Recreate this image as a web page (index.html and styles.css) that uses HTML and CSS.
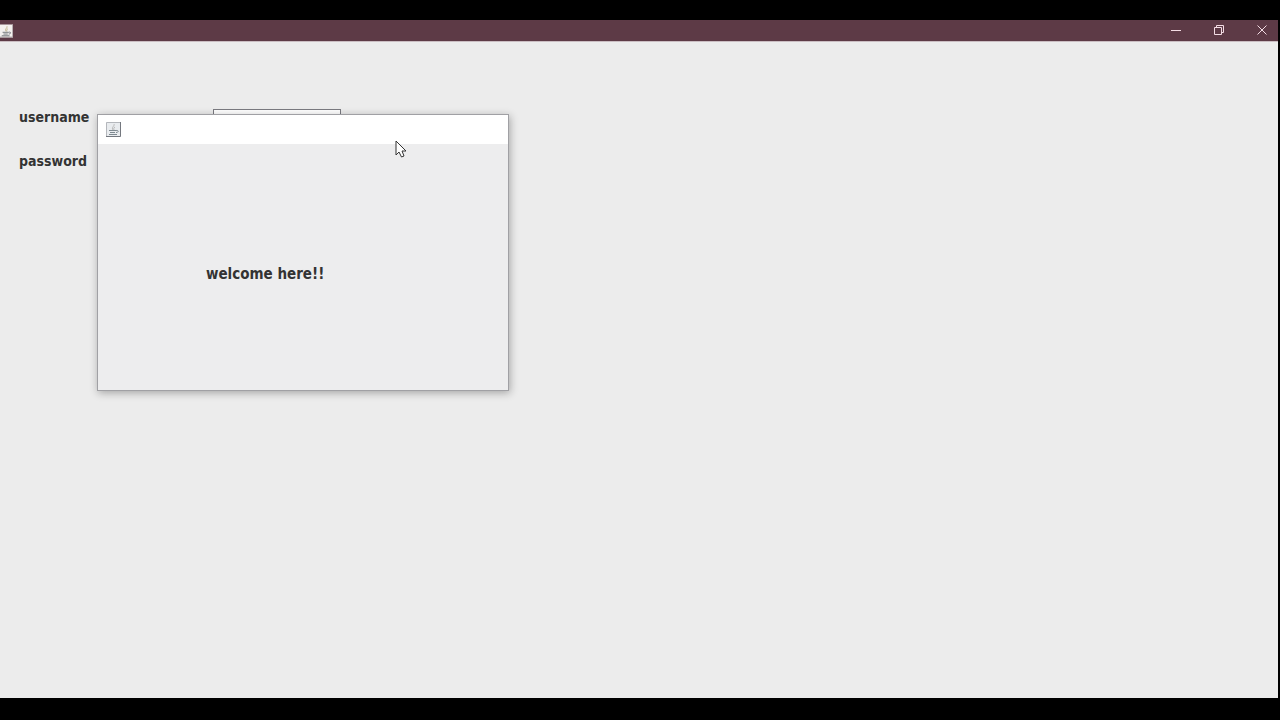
FILE: index.html
```
<!DOCTYPE html>
<html lang="en">
<head>
    <meta charset="UTF-8">
    <meta name="viewport" content="width=device-width, initial-scale=1.0">
    <title>Login</title>
    <link rel="stylesheet" href="styles.css">
</head>
<body>
    <div class="window">
        <!-- Title bar -->
        <header class="titlebar">
            <svg class="java-icon" viewBox="0 0 15 15" aria-hidden="true">
                <rect x="0" y="0" width="15" height="15" fill="#f3f0ee"/>
                <path d="M0 14.5H14.5V0" fill="none" stroke="#aaa0a4"/>
                <path d="M8 2C9 4 5 5 7 8M9 5C7 6 8 7 8 8" fill="none" stroke="#b9ad80"/>
                <path d="M3 9H10M4 11H9M2 13H11M10 9C13 8 13 11 10 11" fill="none" stroke="#65686d"/>
            </svg>
            <div class="window-controls">
                <button type="button" aria-label="Minimize">
                    <svg viewBox="0 0 12 12"><path d="M1 6.5H11"/></svg>
                </button>
                <button type="button" aria-label="Restore">
                    <svg viewBox="0 0 12 12"><path d="M1.5 3.5H8.5V10.5H1.5ZM3.5 3V1.5H10.5V8.5H9"/></svg>
                </button>
                <button type="button" aria-label="Close">
                    <svg viewBox="0 0 12 12"><path d="M1.5 1.5L10.5 10.5M10.5 1.5L1.5 10.5"/></svg>
                </button>
            </div>
        </header>

        <form class="login-form">
            <label for="username">username</label>
            <input type="text" id="username" name="username">
            <label for="password">password</label>
            <input type="password" id="password" name="password">
        </form>
    </div>

    <!-- Welcome window, opened over the login form -->
    <div class="dialog" role="dialog" aria-label="welcome">
        <div class="dialog-titlebar">
            <svg class="java-icon" viewBox="0 0 15 15" aria-hidden="true">
                <rect x="0" y="0" width="15" height="15" fill="#e9ecef"/>
                <path d="M0.5 14V0.5H14" fill="none" stroke="#b4b7bc"/>
                <path d="M0 14.5H14.5V0" fill="none" stroke="#74787f"/>
                <path d="M8 2C9 4 5 5 7 8M9 5C7 6 8 7 8 8" fill="none" stroke="#b9b9b9"/>
                <path d="M3 8.5H10M4 10.5H9M3 12.5H11M10 8.5C13 8 13 10.5 10 10.5" fill="none" stroke="#7e8990"/>
            </svg>
        </div>
        <div class="dialog-content">
            <p>welcome here!!</p>
        </div>
    </div>

    <svg class="cursor" viewBox="0 0 12 18" aria-hidden="true">
        <path d="M1 1V15L4 12L6.5 17L9 16L7 11H11Z" fill="#fff" stroke="#333"/>
    </svg>
</body>
</html>
```
FILE: styles.css
```
* {
    box-sizing: border-box;
}
body {
    display: flex;
    min-height: 100vh;
    margin: 0;
    padding: 20px 2px 22px 0;
    background-color: #000;
    color: #333;
    font-family: "DejaVu Sans Condensed", "Noto Sans", sans-serif;
    font-size: 14px;
    font-weight: bold;
}
.window {
    flex: 1;
    background-color: #ececec;
}
.titlebar {
    display: flex;
    justify-content: space-between;
    align-items: center;
    height: 22px;
    background-color: #5d3a46;
    border-bottom: 1px solid #cbbec3;
}
.java-icon {
    display: block;
    width: 15px;
    height: 15px;
}
.titlebar .java-icon {
    width: 13px;
    height: 14px;
}
.window-controls {
    display: flex;
    height: 100%;
}
.window-controls button {
    display: flex;
    justify-content: center;
    align-items: center;
    width: 43px;
    padding: 0 0 2px 10px;
    border: none;
    background: none;
}
.window-controls svg {
    width: 12px;
    height: 12px;
    fill: none;
    stroke: #f3dce4;
}

/* Login form */
.login-form {
    display: grid;
    grid-template-columns: 194px 128px;
    grid-auto-rows: 24px;
    row-gap: 20px;
    align-items: end;
    padding: 60px 19px;
}
.login-form label {
    line-height: 18px;
}
.login-form input {
    height: 17px;
    border: 1px solid #7a7a80;
    background-color: #fff;
}

/* Welcome window */
.dialog {
    position: absolute;
    top: 114px;
    left: 97px;
    display: flex;
    flex-direction: column;
    width: 412px;
    height: 277px;
    border: 1px solid #a0a0a4;
    background-color: #ededee;
    box-shadow: 1px 2px 8px rgba(0, 0, 0, 0.3);
}
.dialog-titlebar {
    padding: 7px 8px;
    background-color: #fff;
}
.dialog-content {
    padding: 118px 108px;
    font-size: 15px;
    line-height: 24px;
}
.dialog-content p {
    margin: 0;
}

.cursor {
    position: absolute;
    top: 140px;
    left: 395px;
    width: 12px;
    height: 18px;
}
```
